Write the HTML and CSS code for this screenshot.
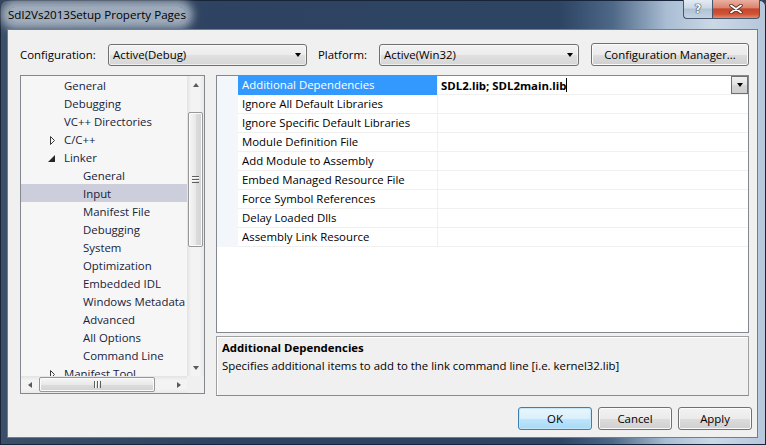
FILE: index.html
```html
<!DOCTYPE html>
<html lang="en">
<head>
<meta charset="utf-8">
<title>Sdl2Vs2013Setup Property Pages</title>
<link rel="stylesheet" href="styles.css">
</head>
<body>
<div class="window">
  <header class="titlebar">
    <div class="title"><span class="title-text">Sdl2Vs2013Setup Property Pages</span></div>
    <div class="caption">
      <div class="cap cap-help"><span class="help-glyph">?</span></div>
      <div class="cap cap-close">
        <svg width="14" height="10" viewBox="0 0 14 10">
          <path d="M2 1.5 L12 8.5 M12 1.5 L2 8.5" stroke="#5a2a22" stroke-width="3.4" stroke-linecap="round" fill="none"/>
          <path d="M2 1.5 L12 8.5 M12 1.5 L2 8.5" stroke="#ffffff" stroke-width="1.8" stroke-linecap="round" fill="none"/>
        </svg>
      </div>
    </div>
  </header>

  <div class="client">
    <div class="toprow">
      <span class="lbl lbl-cfg">Configuration:</span>
      <div class="combo combo-cfg"><span>Active(Debug)</span><span class="tri-down"></span></div>
      <span class="lbl lbl-plat">Platform:</span>
      <div class="combo combo-plat"><span>Active(Win32)</span><span class="tri-down"></span></div>
      <div class="btn btn-mgr">Configuration Manager...</div>
    </div>

    <div class="main">
      <div class="tree">
        <div class="tree-items">
          <div class="trow"><span class="ind1"></span><span class="exp"></span><span class="tl">General</span></div>
          <div class="trow"><span class="ind1"></span><span class="exp"></span><span class="tl">Debugging</span></div>
          <div class="trow"><span class="ind1"></span><span class="exp"></span><span class="tl">VC++ Directories</span></div>
          <div class="trow"><span class="ind1"></span><span class="exp"><svg width="16" height="18" viewBox="0 0 16 18"><path d="M3.5 6.5 L7.5 10.5 L3.5 14.5 Z" fill="none" stroke="#3a3a3a" stroke-width="1"/></svg></span><span class="tl">C/C++</span></div>
          <div class="trow"><span class="ind1"></span><span class="exp"><svg width="16" height="18" viewBox="0 0 16 18"><path d="M8 7 L8 14 L1 14 Z" fill="#262626"/></svg></span><span class="tl">Linker</span></div>
          <div class="trow"><span class="ind2"></span><span class="exp"></span><span class="tl">General</span></div>
          <div class="trow sel"><span class="ind2"></span><span class="exp"></span><span class="tl">Input</span></div>
          <div class="trow"><span class="ind2"></span><span class="exp"></span><span class="tl">Manifest File</span></div>
          <div class="trow"><span class="ind2"></span><span class="exp"></span><span class="tl">Debugging</span></div>
          <div class="trow"><span class="ind2"></span><span class="exp"></span><span class="tl">System</span></div>
          <div class="trow"><span class="ind2"></span><span class="exp"></span><span class="tl">Optimization</span></div>
          <div class="trow"><span class="ind2"></span><span class="exp"></span><span class="tl">Embedded IDL</span></div>
          <div class="trow"><span class="ind2"></span><span class="exp"></span><span class="tl">Windows Metadata</span></div>
          <div class="trow"><span class="ind2"></span><span class="exp"></span><span class="tl">Advanced</span></div>
          <div class="trow"><span class="ind2"></span><span class="exp"></span><span class="tl">All Options</span></div>
          <div class="trow"><span class="ind2"></span><span class="exp"></span><span class="tl">Command Line</span></div>
          <div class="trow"><span class="ind1"></span><span class="exp"><svg width="16" height="18" viewBox="0 0 16 18"><path d="M3.5 6.5 L7.5 10.5 L3.5 14.5 Z" fill="none" stroke="#3a3a3a" stroke-width="1"/></svg></span><span class="tl">Manifest Tool</span></div>
        </div>
        <div class="vscroll">
          <div class="sarrow"><span class="tri-up-s"></span></div>
          <div class="vtrack">
            <div class="vthumb"><span class="grip-h"></span></div>
          </div>
          <div class="sarrow"><span class="tri-down-s"></span></div>
        </div>
        <div class="hscroll">
          <div class="harrow"><span class="tri-left-s"></span></div>
          <div class="htrack">
            <div class="hthumb"><span class="grip-v"></span></div>
          </div>
          <div class="harrow"><span class="tri-right-s"></span></div>
        </div>
        <div class="corner"></div>
      </div>

      <div class="right">
        <div class="grid">
          <div class="prow">
            <div class="gut"></div>
            <div class="pname psel">Additional Dependencies</div>
            <div class="pval pedit"><span class="vtext">SDL2.lib; SDL2main.lib</span><span class="caret"></span><span class="vfill"></span><span class="ddbtn"><span class="tri-down"></span></span></div>
          </div>
          <div class="prow"><div class="gut"></div><div class="pname">Ignore All Default Libraries</div><div class="pval"></div></div>
          <div class="prow"><div class="gut"></div><div class="pname">Ignore Specific Default Libraries</div><div class="pval"></div></div>
          <div class="prow"><div class="gut"></div><div class="pname">Module Definition File</div><div class="pval"></div></div>
          <div class="prow"><div class="gut"></div><div class="pname">Add Module to Assembly</div><div class="pval"></div></div>
          <div class="prow"><div class="gut"></div><div class="pname">Embed Managed Resource File</div><div class="pval"></div></div>
          <div class="prow"><div class="gut"></div><div class="pname">Force Symbol References</div><div class="pval"></div></div>
          <div class="prow"><div class="gut"></div><div class="pname">Delay Loaded Dlls</div><div class="pval"></div></div>
          <div class="prow"><div class="gut"></div><div class="pname">Assembly Link Resource</div><div class="pval"></div></div>
        </div>
        <div class="desc">
          <div class="desc-title">Additional Dependencies</div>
          <div class="desc-text">Specifies additional items to add to the link command line [i.e. kernel32.lib]</div>
        </div>
      </div>
    </div>

    <div class="buttons">
      <div class="btn btn-dlg btn-default">OK</div>
      <div class="btn btn-dlg">Cancel</div>
      <div class="btn btn-dlg">Apply</div>
    </div>
  </div>
</div>
</body>
</html>
```

FILE: styles.css
```css
* { box-sizing: border-box; }
html, body { margin: 0; padding: 0; }
body {
  width: 766px;
  height: 445px;
  overflow: hidden;
  background: #2b3e58;
  font-family: "Open Sans", "Noto Sans", "DejaVu Sans", sans-serif;
  font-size: 11.4px;
  color: #000;
}

.window {
  width: 766px;
  height: 445px;
  display: flex;
  flex-direction: column;
  border-radius: 6px 6px 0 0;
  background: linear-gradient(to right, #3c4f68 0%, #2e4361 28%, #2d4463 73%, #4e6887 80%, #a9bdd3 87%, #cbd8e6 93%, #b6c7db 100%);
  box-shadow: inset 0 0 0 1px #18243a;
}

/* title bar */
.titlebar {
  height: 29px;
  flex: none;
  display: flex;
  justify-content: space-between;
  align-items: flex-start;
  padding: 0 6px 0 8px;
}
.title { margin-top: 6px; font-size: 11.6px; line-height: 17px; }
.title-text {
  color: #000;
  background: rgba(222, 230, 239, 0.62);
  box-shadow: 0 0 9px 7px rgba(222, 230, 239, 0.62);
  border-radius: 8px;
}
.caption { display: flex; }
.cap {
  height: 19px;
  border: 1px solid #46566c;
  border-top: none;
  display: flex;
  align-items: center;
  justify-content: center;
}
.cap-help {
  width: 29px;
  border-right: none;
  border-radius: 0 0 0 4px;
  background: linear-gradient(#e4ebf3 0%, #cad7e5 45%, #b0c1d4 50%, #c4d3e3 100%);
}
.help-glyph {
  font-family: "DejaVu Sans", sans-serif;
  font-size: 12px;
  font-weight: bold;
  color: #f4f7fa;
  text-shadow: 0 0 1px #2f3c4c, 0 0 1px #2f3c4c, 0 0 1px #2f3c4c;
  line-height: 12px;
}
.cap-close {
  width: 48px;
  border-radius: 0 0 4px 0;
  background: linear-gradient(#eab0a2 0%, #db8670 42%, #c7462d 50%, #cf5234 78%, #e48a6e 100%);
}

/* client area */
.client {
  flex: none;
  margin-left: 7px;
  width: 751px;
  height: 409px;
  background: #f0f0f0;
  border: 1px solid #6c7f98;
  padding: 13px 7px 0 12px;
  display: flex;
  flex-direction: column;
}

/* top row */
.toprow { display: flex; align-items: center; height: 23px; flex: none; }
.lbl { flex: none; }
.lbl-cfg { width: 88px; }
.lbl-plat { width: 61px; margin-left: 11px; }
.combo {
  width: 199px;
  height: 22px;
  flex: none;
  border: 1px solid #707070;
  border-radius: 3px;
  background: linear-gradient(#f3f3f3 0%, #ececec 50%, #e0e0e0 51%, #d6d6d6 100%);
  box-shadow: inset 0 0 0 1px rgba(255, 255, 255, 0.6);
  display: flex;
  align-items: center;
  justify-content: space-between;
  padding: 0 5px 0 4px;
}
.combo-plat { width: 200px; }
.tri-down {
  width: 0; height: 0;
  border-left: 3.5px solid transparent;
  border-right: 3.5px solid transparent;
  border-top: 4px solid #000;
}
.btn {
  height: 23px;
  border: 1px solid #707070;
  border-radius: 3px;
  background: linear-gradient(#f2f2f2 0%, #ebebeb 50%, #dddddd 51%, #cfcfcf 100%);
  box-shadow: inset 0 0 0 1px #fbfbfb;
  display: flex;
  align-items: center;
  justify-content: center;
  flex: none;
}
.btn-mgr { width: 158px; margin-left: 12px; }

/* main area */
.main {
  display: grid;
  grid-template-columns: 185px 533px;
  column-gap: 11px;
  margin-top: 9px;
  flex: none;
}

/* tree */
.tree {
  height: 319px;
  border: 1px solid #828790;
  background: #f6f6f6;
  display: grid;
  grid-template-columns: 166px 17px;
  grid-template-rows: 300px 17px;
}
.tree-items { overflow: hidden; }
.trow {
  height: 18px;
  display: flex;
  align-items: center;
  white-space: nowrap;
  color: #16233a;
}
.trow.sel { background: #cccedb; }
.ind1 { width: 26px; flex: none; }
.ind2 { width: 45px; flex: none; }
.exp { width: 16px; height: 18px; flex: none; display: block; }
.exp svg { display: block; }
.tl { padding-left: 1px; }

.vscroll {
  display: flex;
  flex-direction: column;
  background: linear-gradient(to right, #e3e3e3, #f3f3f3 25%, #f3f3f3 75%, #e9e9e9);
}
.sarrow { flex: none; height: 17px; display: flex; align-items: center; justify-content: center; }
.vtrack { flex: 1; }
.vthumb {
  margin: 19px 1px 0 1px;
  height: 135px;
  border: 1px solid #979797;
  border-radius: 2px;
  background: linear-gradient(to right, #f6f6f6, #e9e9e9 50%, #dcdcdc 51%, #d3d3d3);
  box-shadow: inset 0 0 0 1px #fbfbfb;
  display: flex;
  align-items: center;
  justify-content: center;
}
.grip-h {
  width: 7px; height: 7px;
  background: repeating-linear-gradient(#5e5e5e 0 1px, #fafafa 1px 2px, transparent 2px 3px);
}
.hscroll {
  display: flex;
  background: linear-gradient(#e3e3e3, #f3f3f3 25%, #f3f3f3 75%, #e9e9e9);
}
.harrow { flex: none; width: 17px; display: flex; align-items: center; justify-content: center; }
.htrack { flex: 1; }
.hthumb {
  margin: 1px 0 0 1px;
  width: 116px;
  height: 15px;
  border: 1px solid #979797;
  border-radius: 2px;
  background: linear-gradient(#f6f6f6, #e9e9e9 50%, #dcdcdc 51%, #d3d3d3);
  box-shadow: inset 0 0 0 1px #fbfbfb;
  display: flex;
  align-items: center;
  justify-content: center;
}
.grip-v {
  width: 7px; height: 7px;
  background: repeating-linear-gradient(to right, #5e5e5e 0 1px, #fafafa 1px 2px, transparent 2px 3px);
}
.corner { background: #f0f0f0; }
.tri-up-s { width: 0; height: 0; border-left: 3.5px solid transparent; border-right: 3.5px solid transparent; border-bottom: 4px solid #5a5a5a; }
.tri-down-s { width: 0; height: 0; border-left: 3.5px solid transparent; border-right: 3.5px solid transparent; border-top: 4px solid #5a5a5a; }
.tri-left-s { width: 0; height: 0; border-top: 3.5px solid transparent; border-bottom: 3.5px solid transparent; border-right: 4px solid #5a5a5a; }
.tri-right-s { width: 0; height: 0; border-top: 3.5px solid transparent; border-bottom: 3.5px solid transparent; border-left: 4px solid #5a5a5a; }

/* right column */
.right { display: flex; flex-direction: column; gap: 3px; }
.grid {
  height: 258px;
  border: 1px solid #828790;
  background: #fff;
}
.prow {
  height: 19px;
  display: grid;
  grid-template-columns: 21px 199px 311px;
}
.gut { background: #f3f6fb; }
.pname {
  border-bottom: 1px solid #f0f0f0;
  padding-left: 4px;
  line-height: 18px;
  white-space: nowrap;
  color: #000;
}
.pname.psel { background: #3399ff; color: #fff; border-bottom-color: #3399ff; }
.pval { border-bottom: 1px solid #f0f0f0; border-left: 1px solid #f0f0f0; }
.pedit {
  display: flex;
  align-items: center;
  padding-left: 3px;
  border-bottom-color: #f0f0f0;
}
.vtext { font-weight: bold; white-space: nowrap; }
.caret { width: 1px; height: 14px; background: #000; flex: none; }
.vfill { flex: 1; }
.ddbtn {
  width: 17px;
  height: 18px;
  flex: none;
  border: 1px solid #707070;
  background: linear-gradient(#f0f0f0, #e3e3e3 50%, #d6d6d6 51%, #cdcdcd);
  display: flex;
  align-items: center;
  justify-content: center;
  align-self: flex-start;
}

.desc {
  height: 60px;
  border: 1px solid #a0a0a0;
  border-bottom-color: #8a8a8a;
  box-shadow: inset 1px 1px 0 #fff;
  background: #f0f0f0;
  padding: 2px 5px 0 5px;
  line-height: 18px;
}
.desc-title { font-weight: bold; }

/* dialog buttons */
.buttons {
  display: flex;
  justify-content: flex-end;
  gap: 6px;
  margin-top: 11px;
  margin-right: -2px;
}
.btn-dlg { width: 74px; }
.btn-default {
  border-color: #3c7fb1;
  background: linear-gradient(#eaf6fd 0%, #d9f0fc 50%, #bee6fd 51%, #a7d9f5 100%);
  box-shadow: inset 0 0 0 1px #c5e5f9;
}
```
